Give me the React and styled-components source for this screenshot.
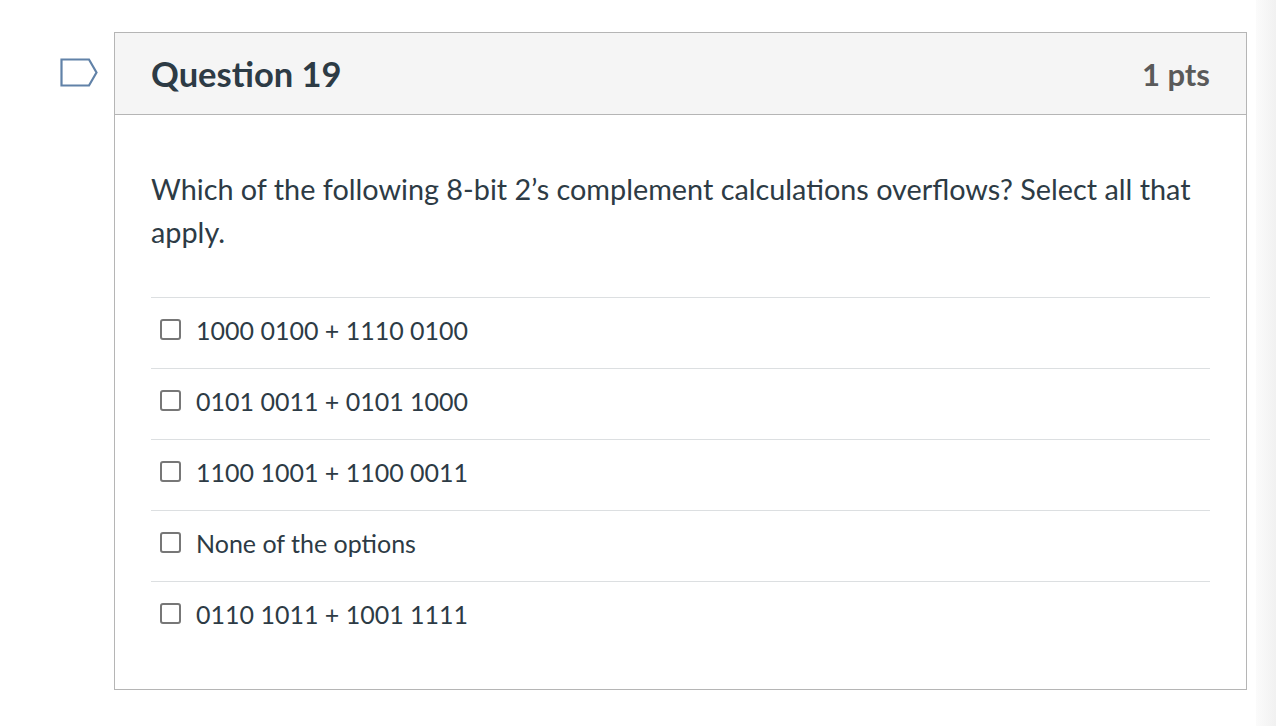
import React from 'react'
import styled, { createGlobalStyle } from 'styled-components'

const GlobalStyle = createGlobalStyle`
    html, body {
        margin: 0;
        padding: 0;
        background: #fff;
        font-family: Lato, "Open Sans", sans-serif;
        color: #2d3b45;
    }
`

const Page = styled.div`
    display: flex;
    min-height: 726px;
`

const Main = styled.div`
    flex: 1;
    display: flex;
    padding: 32px 0 0 60px;
    gap: 16px;
`

const EdgeShade = styled.div`
    width: 20px;
    background: linear-gradient(to right, #fbfbfb, #f1f1f1);
`

const FlagColumn = styled.div`
    padding-top: 26px;
    width: 38px;
`

const QuestionCard = styled.section`
    width: 1133px;
    height: 658px;
    border: 1px solid #b5b5b5;
    box-sizing: border-box;
    display: flex;
    flex-direction: column;
`

const CardHeader = styled.header`
    display: flex;
    align-items: center;
    justify-content: space-between;
    height: 81px;
    padding: 0 36px 0 36px;
    background: #f5f5f5;
    border-bottom: 1px solid #b5b5b5;
`

const Title = styled.h2`
    margin: 0;
    font-size: 34.5px;
    font-weight: 700;
    color: #2d3b45;
`

const Points = styled.span`
    font-size: 31px;
    font-weight: 700;
    color: #5a5a5a;
`

const CardBody = styled.div`
    padding: 53px 36px 0 36px;
`

const Prompt = styled.p`
    margin: 0 0 43px 0;
    font-size: 28.8px;
    line-height: 43px;
`

const AnswerList = styled.ul`
    list-style: none;
    margin: 0;
    padding: 0;
`

const AnswerRow = styled.li`
    display: flex;
    align-items: center;
    gap: 15px;
    height: 71px;
    box-sizing: border-box;
    padding: 0 0 7px 9px;
    border-top: 1px solid #dcdfe1;
    font-size: 25px;
`

const CheckBox = styled.span`
    width: 17px;
    height: 17px;
    border: 2px solid #777;
    border-radius: 3px;
    flex-shrink: 0;
`

const answers = [
    '1000 0100 + 1110 0100',
    '0101 0011 + 0101 1000',
    '1100 1001 + 1100 0011',
    'None of the options',
    '0110 1011 + 1001 1111',
]

export default function App() {
    return (
        <>
            <GlobalStyle />
            <Page>
                <Main>
                    <FlagColumn>
                        <svg width="38" height="30" viewBox="0 0 38 30">
                            <path d="M1.5 1.5 H29 L36.5 14.5 L29 27.5 H1.5 Z" fill="none" stroke="#6182a8" strokeWidth="2.2" />
                        </svg>
                    </FlagColumn>
                    <QuestionCard>
                        <CardHeader>
                            <Title>Question 19</Title>
                            <Points>1 pts</Points>
                        </CardHeader>
                        <CardBody>
                            <Prompt>Which of the following 8-bit 2’s complement calculations overflows? Select all that apply.</Prompt>
                            <AnswerList>
                                {answers.map((a) => (
                                    <AnswerRow key={a}>
                                        <CheckBox />
                                        <span>{a}</span>
                                    </AnswerRow>
                                ))}
                            </AnswerList>
                        </CardBody>
                    </QuestionCard>
                </Main>
                <EdgeShade />
            </Page>
        </>
    )
}
